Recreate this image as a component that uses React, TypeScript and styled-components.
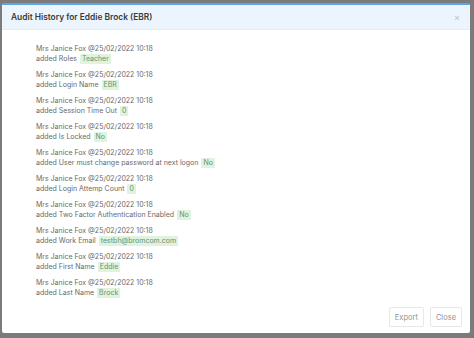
import React from "react";
import styled, { createGlobalStyle } from "styled-components";

const Global = createGlobalStyle`
  html, body { margin: 0; padding: 0; }
  body { font-family: Inter, "Noto Sans", sans-serif; background: #7b7b7b; }
`;

const Overlay = styled.div`
  height: 338px;
  box-sizing: border-box;
  padding: 3px 4px 5px 2px;
  background: #7b7b7b;
  display: flex;
`;

const Modal = styled.div`
  flex: 1;
  display: flex;
  flex-direction: column;
  background: #fff;
  border-top: 2px solid #5ba6ea;
  border-radius: 2px;
  overflow: hidden;
`;

const Header = styled.div`
  height: 24px;
  flex: none;
  display: flex;
  align-items: center;
  justify-content: space-between;
  padding: 0 10px 0 9px;
  background: #ecf5fd;
  border-bottom: 1px solid #e4edf5;
`;

const Title = styled.div`
  font-size: 8.4px;
  font-weight: 600;
  color: #3a3a3a;
`;

const CloseX = styled.span`
  font-size: 9px;
  color: #b9bec4;
`;

const Body = styled.div`
  flex: 1;
  padding: 14px 0 0 34px;
  display: flex;
  flex-direction: column;
  gap: 6px;
`;

const Entry = styled.div`
  display: flex;
  flex-direction: column;
  font-size: 7px;
  line-height: 10px;
  color: #6a6a6a;
`;

const Line = styled.div`
  display: flex;
  align-items: center;
  white-space: nowrap;
`;

const Tag = styled.span`
  margin-left: 3px;
  padding: 0 2px;
  background: #dff3df;
  color: #6a9270;
  line-height: 10px;
`;

const Footer = styled.div`
  flex: none;
  display: flex;
  justify-content: flex-end;
  gap: 6px;
  padding: 0 8px 6px 0;
`;

const Button = styled.button`
  height: 20px;
  padding: 0 5px;
  background: #fff;
  border: 1px solid #e8e8e8;
  border-radius: 2px;
  font-family: Inter, "Noto Sans", sans-serif;
  font-size: 7.5px;
  color: #939393;
`;

const items: [string, string][] = [
  ["Roles", "Teacher"],
  ["Login Name", "EBR"],
  ["Session Time Out", "0"],
  ["Is Locked", "No"],
  ["User must change password at next logon", "No"],
  ["Login Attemp Count", "0"],
  ["Two Factor Authentication Enabled", "No"],
  ["Work Email", "testbh@bromcom.com"],
  ["First Name", "Eddie"],
  ["Last Name", "Brock"],
];

export default function App() {
  return (
    <>
      <Global />
      <Overlay>
        <Modal>
          <Header>
            <Title>Audit History for Eddie Brock (EBR)</Title>
            <CloseX>×</CloseX>
          </Header>
          <Body>
            {items.map(([k, v]) => (
              <Entry key={k}>
                <Line>Mrs Janice Fox @25/02/2022 10:18</Line>
                <Line>
                  added {k}
                  <Tag>{v}</Tag>
                </Line>
              </Entry>
            ))}
          </Body>
          <Footer>
            <Button>Export</Button>
            <Button>Close</Button>
          </Footer>
        </Modal>
      </Overlay>
    </>
  );
}
